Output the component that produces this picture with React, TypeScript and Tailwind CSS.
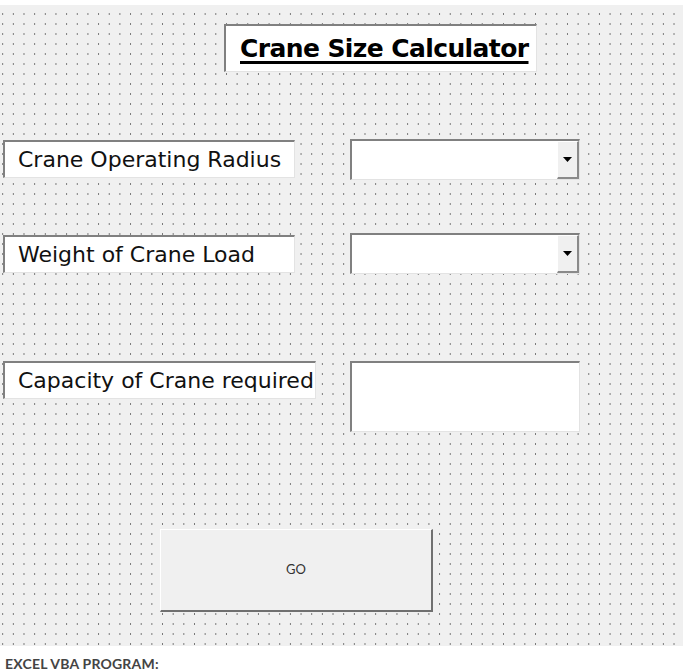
const sunken =
  "border-t-2 border-l-2 border-r border-b border-t-[#808080] border-l-[#808080] border-r-[#e3e3e3] border-b-[#e3e3e3] bg-white";

function LabelBox({ text, width }: { text: string; width: string }) {
  return (
    <div className={`${sunken} ${width} flex h-[38px] items-center pl-[13px] text-[22px] leading-none text-[#111]`}>
      <span className="whitespace-nowrap">{text}</span>
    </div>
  );
}

function ComboBox() {
  return (
    <div className={`${sunken} flex h-[41px] w-[230px] justify-end`}>
      <div className="flex w-[22px] items-center justify-center border-t border-l border-r-2 border-b-2 border-t-white border-l-white border-r-[#8a8a8a] border-b-[#8a8a8a] bg-[#f0f0f0]">
        <svg width="9" height="5" viewBox="0 0 9 5">
          <path d="M0 0h9L4.5 5z" fill="#000" />
        </svg>
      </div>
    </div>
  );
}

export default function App() {
  return (
    <div className="min-h-[671px] bg-white pt-[5px] font-['DejaVu_Sans',sans-serif]">
      <div className="h-[641px] bg-[#f0f0f0] bg-[radial-gradient(#777_0.6px,transparent_1px)] bg-[length:10.67px_10px] bg-[position:-2.67px_4px] pt-[19px]">
        <div className={`${sunken} ml-[224px] flex h-[48px] w-[313px] items-center pl-[14px]`}>
          <span className="whitespace-nowrap text-[25px] font-bold leading-none tracking-[-0.6px] text-black underline decoration-[3px] underline-offset-[4px]">
            Crane Size Calculator
          </span>
        </div>

        <div className="mt-[67px] flex items-start">
          <div className="ml-[3px] mt-[1px]">
            <LabelBox text="Crane Operating Radius" width="w-[292px]" />
          </div>
          <div className="ml-[55px]">
            <ComboBox />
          </div>
        </div>

        <div className="mt-[53px] flex items-start">
          <div className="ml-[3px] mt-[2px]">
            <LabelBox text="Weight of Crane Load" width="w-[292px]" />
          </div>
          <div className="ml-[55px]">
            <ComboBox />
          </div>
        </div>

        <div className="mt-[87px] flex items-start">
          <div className="ml-[3px]">
            <LabelBox text="Capacity of Crane required" width="w-[313px]" />
          </div>
          <div className={`${sunken} ml-[34px] h-[71px] w-[230px]`} />
        </div>

        <div className="ml-[160px] mt-[97px] flex h-[83px] w-[273px] items-center justify-center border-t border-l border-r-2 border-b-2 border-t-white border-l-white border-r-[#707070] border-b-[#707070] bg-[#f0f0f0] font-['Lato',sans-serif] text-[13px] text-[#333]">
          GO
        </div>
      </div>
      <div className="pl-[5px] pt-[11px] font-['Lato',sans-serif] text-[14px] font-bold leading-none tracking-[0.2px] text-[#444]">
        EXCEL VBA PROGRAM:
      </div>
    </div>
  );
}
